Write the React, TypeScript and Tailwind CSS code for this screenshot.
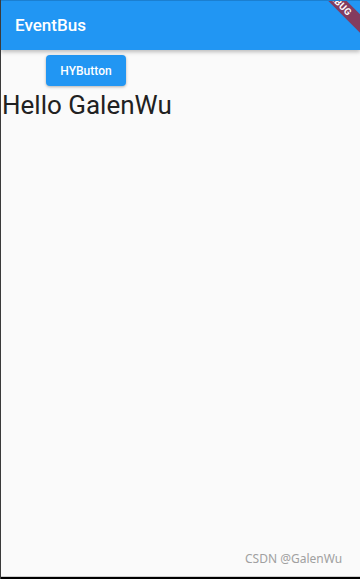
import React from "react";

export default function App() {
  return (
    <div
      className="relative w-[360px] h-[579px] overflow-hidden bg-[#fafafa] flex flex-col border-l border-[#3a3a3a]"
      style={{ fontFamily: "Roboto, 'Noto Sans', sans-serif" }}
    >
      <div className="relative z-10 h-[50px] shrink-0 bg-[#2196f3] border-t border-[#1b7fd0] shadow-[0_2px_4px_rgba(0,0,0,0.25)] flex items-center pl-[14px] overflow-hidden">
        <span className="text-white text-[17px] font-medium leading-none pb-[1px]">EventBus</span>
        <div className="absolute left-[288px] top-[-5px] w-[100px] h-[13px] rotate-45 bg-[#a61e2e]/[0.75] flex items-center justify-center">
          <span className="text-white text-[9.5px] font-bold leading-none tracking-[0.3px]">DEBUG</span>
        </div>
      </div>
      <div className="flex-1 flex flex-col">
        <div className="h-[41px] flex items-center pl-[45px]">
          <button className="h-[31px] w-[80px] rounded-[4px] bg-[#2196f3] text-white text-[12px] font-medium shadow-[0_1px_3px_rgba(0,0,0,0.3)] flex items-center justify-center">
            HYButton
          </button>
        </div>
        <div className="pl-[1px] -mt-[1px] text-[26px] leading-[1.172] text-[#212121]">Hello GalenWu</div>
      </div>
      <div className="h-[1px] shrink-0 bg-[#cfcfcf]" />
      <div className="h-[2px] shrink-0 bg-black" />
      <div
        className="absolute left-[244px] top-[553px] text-[12px] text-[#a0a0a0] leading-none"
        style={{ fontFamily: "'Noto Sans', sans-serif" }}
      >
        CSDN @GalenWu
      </div>
    </div>
  );
}
